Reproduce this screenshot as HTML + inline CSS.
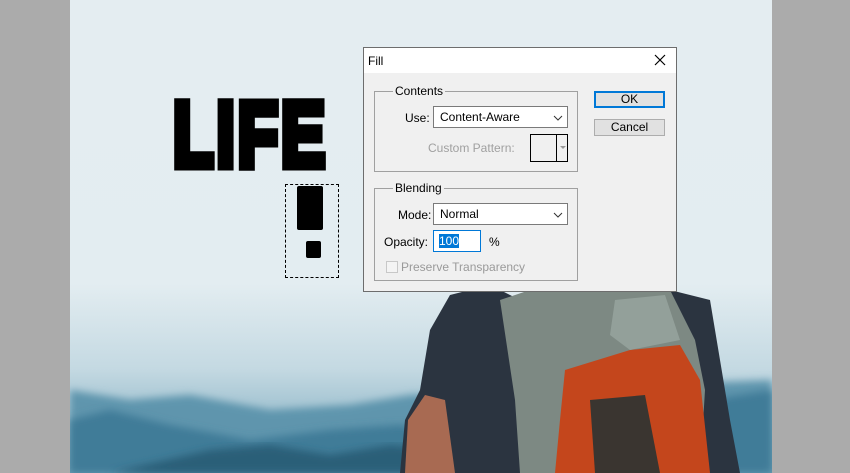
<!DOCTYPE html>
<html><head><style>
*{margin:0;padding:0;box-sizing:border-box}
body{width:850px;height:473px;background:#ababab;position:relative;overflow:hidden;font-family:"Liberation Sans",Arial,sans-serif;font-size:12px;color:#000}
.abs{position:absolute}
#dlg{left:363px;top:47px;width:314px;height:245px;background:#f0f0f0;border:1px solid #6d6d6d}
.grp{position:absolute;border:1px solid #a0a0a0}
.lg{position:absolute;top:-8px;left:18px;background:#f0f0f0;padding:0 2px;font-size:12px}
.dd{position:absolute;background:#fff;border:1px solid #7a7a7a;padding-left:6px;line-height:20px}
.btn{position:absolute;background:#e1e1e1;border:1px solid #adadad;text-align:center;line-height:15px}
</style></head><body>
<svg class="abs" style="left:70px;top:0" width="702" height="473">
<defs>
<linearGradient id="sky" x1="0" y1="0" x2="0" y2="1">
<stop offset="0" stop-color="#e4edf1"/><stop offset="0.6" stop-color="#e3edf1"/><stop offset="0.78" stop-color="#c4d9e2"/><stop offset="1" stop-color="#6fa2b8"/></linearGradient>
<filter id="b"><feGaussianBlur stdDeviation="4"/></filter>
</defs>
<rect width="702" height="473" fill="url(#sky)"/>
<path d="M0 390 L60 400 L120 395 L200 410 L280 405 L340 395 L702 380 L702 473 L0 473Z" fill="#5f95ad" filter="url(#b)"/>
<path d="M0 420 L40 410 L100 425 L180 440 L260 430 L330 425 L380 432 L380 473 L0 473Z" fill="#3f7c98" filter="url(#b)"/>
<path d="M40 473 L140 450 L200 445 L260 455 L320 445 L380 450 L380 473Z" fill="#2a5f78" filter="url(#b)"/>
<path d="M640 400 L702 390 L702 473 L640 473Z" fill="#3f7c98" filter="url(#b)"/>
<path d="M330 473 L335 420 L350 390 L360 330 L380 295 L400 290 L430 290 L450 300 L460 473Z" fill="#2b3440"/>
<path d="M335 473 L338 420 L355 395 L375 400 L385 473Z" fill="#a86a52"/>
<path d="M600 290 L640 300 L650 360 L660 420 L670 473 L600 473Z" fill="#2b3440"/>
<path d="M430 300 L460 290 L600 290 L625 340 L635 390 L630 473 L450 473 L445 400Z" fill="#7d8983"/>
<path d="M495 370 L560 350 L610 345 L630 380 L640 473 L485 473 L490 420Z" fill="#c4461c"/>
<path d="M520 400 L575 395 L590 473 L525 473Z" fill="#3a3530"/>
<path d="M545 300 L595 295 L610 340 L560 350 L540 335Z" fill="#93a09a"/>
</svg>
<div class="abs" style="left:173px;top:89px;font-size:92px;font-weight:bold;transform:scaleX(0.72);transform-origin:0 0;-webkit-text-stroke:9px #000;letter-spacing:4px;line-height:92px">LIFE</div>
<div class="abs" style="left:297px;top:186px;width:26px;height:44px;background:#000;border-radius:2px"></div>
<div class="abs" style="left:306px;top:241px;width:15px;height:17px;background:#000;border-radius:2px"></div>
<div class="abs" style="left:285px;top:184px;width:54px;height:94px;border:1px dashed #000"></div>

<div id="dlg" class="abs">
<div class="abs" style="left:0;top:0;width:312px;height:25px;background:#fff"></div>
<div class="abs" style="left:4px;top:6px">Fill</div>
<svg class="abs" style="left:290px;top:6px" width="12" height="12"><path d="M1 1L11 11M11 1L1 11" stroke="#000" stroke-width="1.2"/></svg>
<div class="grp" style="left:10px;top:43px;width:204px;height:81px"><span class="lg">Contents</span></div>
<div class="abs" style="left:41px;top:63px">Use:</div>
<div class="dd" style="left:69px;top:58px;width:135px;height:22px">Content-Aware</div>
<svg class="abs" style="left:189px;top:67px" width="10" height="6"><path d="M1 1L5 5L9 1" fill="none" stroke="#333"/></svg>
<div class="abs" style="left:64px;top:93px;color:#a0a0a0">Custom Pattern:</div>
<div class="abs" style="left:166px;top:86px;width:38px;height:28px;border:1px solid #000"><div class="abs" style="left:25px;top:0;width:1px;height:26px;background:#000"></div><div class="abs" style="left:29px;top:11px;border:3px solid transparent;border-top:3px solid #999"></div></div>
<div class="grp" style="left:10px;top:140px;width:204px;height:93px"><span class="lg">Blending</span></div>
<div class="abs" style="left:34px;top:160px">Mode:</div>
<div class="dd" style="left:69px;top:155px;width:135px;height:22px">Normal</div>
<svg class="abs" style="left:189px;top:164px" width="10" height="6"><path d="M1 1L5 5L9 1" fill="none" stroke="#333"/></svg>
<div class="abs" style="left:20px;top:187px">Opacity:</div>
<div class="abs" style="left:69px;top:182px;width:48px;height:22px;background:#fff;border:1px solid #0078d7"><span class="abs" style="left:5px;top:3px;background:#0078d7;color:#fff;line-height:14px">100</span></div>
<div class="abs" style="left:125px;top:187px">%</div>
<div class="abs" style="left:22px;top:213px;width:12px;height:12px;border:1px solid #c8c8c8;background:#f4f4f4"></div>
<div class="abs" style="left:37px;top:212px;color:#9a9a9a">Preserve Transparency</div>
<div class="btn" style="left:230px;top:43px;width:71px;height:17px;border:2px solid #0078d7;line-height:13px">OK</div>
<div class="btn" style="left:230px;top:71px;width:71px;height:17px">Cancel</div>
</div>
</body></html>
